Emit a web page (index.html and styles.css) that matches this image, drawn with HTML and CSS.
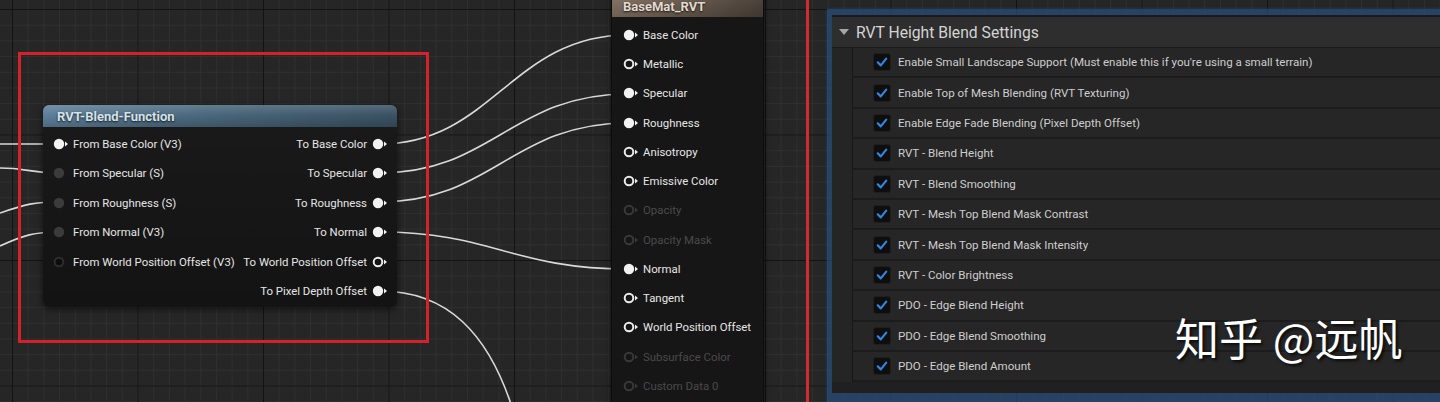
FILE: index.html
```html
<!DOCTYPE html>
<html lang="en">
<head>
<meta charset="utf-8">
<title>RVT Blend</title>
<link rel="stylesheet" href="styles.css">
</head>
<body>
<div class="canvas">
  <svg class="wires" width="1440" height="402" viewBox="0 0 1440 402">
    <path d="M0 144 L60 144"/>
    <path d="M0 168 C28 168 28 173 60 173"/>
    <path d="M0 213 C26 204 34 202 60 202"/>
    <path d="M0 246 C24 235 34 232 60 232"/>
    <path d="M380 144 C492 144 512 35 628 35"/>
    <path d="M380 173 C492 173 512 94 628 94"/>
    <path d="M380 202 C492 202 512 123 628 123"/>
    <path d="M380 232 C492 232 512 269 628 269"/>
    <path d="M380 291 C445 291 490 330 516 420"/>
  </svg>

  <div class="sel-box"></div>
  <div class="sel-line"></div>

  <div class="node rvt">
    <div class="node-title">RVT-Blend-Function</div>
    <div class="node-body">
      <div class="row">
        <span class="pin-l"><svg class="pin on" viewBox="0 0 16 12"><circle cx="6" cy="6" r="5.2"/><path d="M12 3.6 L15 6 L12 8.4Z"/></svg>From Base Color (V3)</span>
        <span class="pin-r">To Base Color<svg class="pin on" viewBox="0 0 16 12"><circle cx="6" cy="6" r="5.2"/><path d="M12 3.6 L15 6 L12 8.4Z"/></svg></span>
      </div>
      <div class="row">
        <span class="pin-l"><svg class="pin dimfill" viewBox="0 0 16 12"><circle cx="6" cy="6" r="5.2"/></svg>From Specular (S)</span>
        <span class="pin-r">To Specular<svg class="pin on" viewBox="0 0 16 12"><circle cx="6" cy="6" r="5.2"/><path d="M12 3.6 L15 6 L12 8.4Z"/></svg></span>
      </div>
      <div class="row">
        <span class="pin-l"><svg class="pin dimfill" viewBox="0 0 16 12"><circle cx="6" cy="6" r="5.2"/></svg>From Roughness (S)</span>
        <span class="pin-r">To Roughness<svg class="pin on" viewBox="0 0 16 12"><circle cx="6" cy="6" r="5.2"/><path d="M12 3.6 L15 6 L12 8.4Z"/></svg></span>
      </div>
      <div class="row">
        <span class="pin-l"><svg class="pin dimfill" viewBox="0 0 16 12"><circle cx="6" cy="6" r="5.2"/></svg>From Normal (V3)</span>
        <span class="pin-r">To Normal<svg class="pin on" viewBox="0 0 16 12"><circle cx="6" cy="6" r="5.2"/><path d="M12 3.6 L15 6 L12 8.4Z"/></svg></span>
      </div>
      <div class="row">
        <span class="pin-l"><svg class="pin darkring" viewBox="0 0 16 12"><circle cx="6" cy="6" r="4.3"/></svg>From World Position Offset (V3)</span>
        <span class="pin-r">To World Position Offset<svg class="pin ring" viewBox="0 0 16 12"><circle cx="6" cy="6" r="4.3"/><path d="M12 3.6 L15 6 L12 8.4Z"/></svg></span>
      </div>
      <div class="row">
        <span class="pin-l"></span>
        <span class="pin-r">To Pixel Depth Offset<svg class="pin on" viewBox="0 0 16 12"><circle cx="6" cy="6" r="5.2"/><path d="M12 3.6 L15 6 L12 8.4Z"/></svg></span>
      </div>
    </div>
  </div>

  <div class="node mat">
    <div class="node-title">BaseMat_RVT</div>
    <div class="node-body">
      <div class="mrow"><svg class="pin on" viewBox="0 0 16 12"><circle cx="6" cy="6" r="5.2"/><path d="M12 3.6 L15 6 L12 8.4Z"/></svg>Base Color</div>
      <div class="mrow"><svg class="pin ring" viewBox="0 0 16 12"><circle cx="6" cy="6" r="4.3"/><path d="M12 3.6 L15 6 L12 8.4Z"/></svg>Metallic</div>
      <div class="mrow"><svg class="pin on" viewBox="0 0 16 12"><circle cx="6" cy="6" r="5.2"/><path d="M12 3.6 L15 6 L12 8.4Z"/></svg>Specular</div>
      <div class="mrow"><svg class="pin on" viewBox="0 0 16 12"><circle cx="6" cy="6" r="5.2"/><path d="M12 3.6 L15 6 L12 8.4Z"/></svg>Roughness</div>
      <div class="mrow"><svg class="pin ring" viewBox="0 0 16 12"><circle cx="6" cy="6" r="4.3"/><path d="M12 3.6 L15 6 L12 8.4Z"/></svg>Anisotropy</div>
      <div class="mrow"><svg class="pin ring" viewBox="0 0 16 12"><circle cx="6" cy="6" r="4.3"/><path d="M12 3.6 L15 6 L12 8.4Z"/></svg>Emissive Color</div>
      <div class="mrow dim"><svg class="pin dimring" viewBox="0 0 16 12"><circle cx="6" cy="6" r="4.3"/><path d="M12 3.6 L15 6 L12 8.4Z"/></svg>Opacity</div>
      <div class="mrow dim"><svg class="pin dimring" viewBox="0 0 16 12"><circle cx="6" cy="6" r="4.3"/><path d="M12 3.6 L15 6 L12 8.4Z"/></svg>Opacity Mask</div>
      <div class="mrow"><svg class="pin on" viewBox="0 0 16 12"><circle cx="6" cy="6" r="5.2"/><path d="M12 3.6 L15 6 L12 8.4Z"/></svg>Normal</div>
      <div class="mrow"><svg class="pin ring" viewBox="0 0 16 12"><circle cx="6" cy="6" r="4.3"/><path d="M12 3.6 L15 6 L12 8.4Z"/></svg>Tangent</div>
      <div class="mrow"><svg class="pin ring" viewBox="0 0 16 12"><circle cx="6" cy="6" r="4.3"/><path d="M12 3.6 L15 6 L12 8.4Z"/></svg>World Position Offset</div>
      <div class="mrow dim"><svg class="pin dimring" viewBox="0 0 16 12"><circle cx="6" cy="6" r="4.3"/><path d="M12 3.6 L15 6 L12 8.4Z"/></svg>Subsurface Color</div>
      <div class="mrow dim"><svg class="pin dimring" viewBox="0 0 16 12"><circle cx="6" cy="6" r="4.3"/><path d="M12 3.6 L15 6 L12 8.4Z"/></svg>Custom Data 0</div>
    </div>
  </div>

  <div class="details">
    <div class="cat"><span class="tri"></span>RVT Height Blend Settings</div>
    <div class="prop"><span class="indent"></span><div class="prop-main"><span class="cb"><svg viewBox="0 0 18 18"><path d="M4.2 9.4 L7.6 12.8 L13.8 5.2"/></svg></span>Enable Small Landscape Support (Must enable this if you're using a small terrain)</div></div>
    <div class="prop"><span class="indent"></span><div class="prop-main"><span class="cb"><svg viewBox="0 0 18 18"><path d="M4.2 9.4 L7.6 12.8 L13.8 5.2"/></svg></span>Enable Top of Mesh Blending (RVT Texturing)</div></div>
    <div class="prop"><span class="indent"></span><div class="prop-main"><span class="cb"><svg viewBox="0 0 18 18"><path d="M4.2 9.4 L7.6 12.8 L13.8 5.2"/></svg></span>Enable Edge Fade Blending (Pixel Depth Offset)</div></div>
    <div class="prop"><span class="indent"></span><div class="prop-main"><span class="cb"><svg viewBox="0 0 18 18"><path d="M4.2 9.4 L7.6 12.8 L13.8 5.2"/></svg></span>RVT - Blend Height</div></div>
    <div class="prop"><span class="indent"></span><div class="prop-main"><span class="cb"><svg viewBox="0 0 18 18"><path d="M4.2 9.4 L7.6 12.8 L13.8 5.2"/></svg></span>RVT - Blend Smoothing</div></div>
    <div class="prop"><span class="indent"></span><div class="prop-main"><span class="cb"><svg viewBox="0 0 18 18"><path d="M4.2 9.4 L7.6 12.8 L13.8 5.2"/></svg></span>RVT - Mesh Top Blend Mask Contrast</div></div>
    <div class="prop"><span class="indent"></span><div class="prop-main"><span class="cb"><svg viewBox="0 0 18 18"><path d="M4.2 9.4 L7.6 12.8 L13.8 5.2"/></svg></span>RVT - Mesh Top Blend Mask Intensity</div></div>
    <div class="prop"><span class="indent"></span><div class="prop-main"><span class="cb"><svg viewBox="0 0 18 18"><path d="M4.2 9.4 L7.6 12.8 L13.8 5.2"/></svg></span>RVT - Color Brightness</div></div>
    <div class="prop"><span class="indent"></span><div class="prop-main"><span class="cb"><svg viewBox="0 0 18 18"><path d="M4.2 9.4 L7.6 12.8 L13.8 5.2"/></svg></span>PDO - Edge Blend Height</div></div>
    <div class="prop"><span class="indent"></span><div class="prop-main"><span class="cb"><svg viewBox="0 0 18 18"><path d="M4.2 9.4 L7.6 12.8 L13.8 5.2"/></svg></span>PDO - Edge Blend Smoothing</div></div>
    <div class="prop"><span class="indent"></span><div class="prop-main"><span class="cb"><svg viewBox="0 0 18 18"><path d="M4.2 9.4 L7.6 12.8 L13.8 5.2"/></svg></span>PDO - Edge Blend Amount</div></div>
    <div class="details-foot"></div>
  </div>

  <div class="watermark">知乎 @远帆</div>
</div>
</body>
</html>
```

FILE: styles.css
```css
html, body {
  margin: 0;
  padding: 0;
  background: #252525;
}

.canvas {
  position: relative;
  width: 1440px;
  height: 402px;
  overflow: hidden;
  font-family: Roboto, "Liberation Sans", sans-serif;
  background-color: #262626;
  background-image:
    linear-gradient(to right, #131313 1px, transparent 1px),
    linear-gradient(to bottom, #131313 1px, transparent 1px),
    linear-gradient(to right, #2f2f2f 1px, transparent 1px),
    linear-gradient(to bottom, #2f2f2f 1px, transparent 1px);
  background-size: 125.5px 125.5px, 125.5px 125.5px, 15.6875px 15.6875px, 15.6875px 15.6875px;
  background-position: 12px 9px, 12px 9px, 12px 9px, 12px 9px;
}

.wires {
  position: absolute;
  left: 0;
  top: 0;
}

.wires path {
  fill: none;
  stroke: #d9d9d9;
  stroke-width: 1.6;
}

.sel-box {
  position: absolute;
  left: 18px;
  top: 52px;
  width: 411px;
  height: 291px;
  box-sizing: border-box;
  border: 3px solid #d3222c;
}

.sel-line {
  position: absolute;
  left: 806px;
  top: 0;
  width: 3px;
  height: 402px;
  background: #d52930;
}

/* ---------- nodes ---------- */
.node {
  position: absolute;
  background: #151515;
  color: #e6e6e6;
  font-size: 11.4px;
  box-shadow: 0 2px 6px rgba(0, 0, 0, 0.6);
}

.node-title {
  font-weight: bold;
  font-size: 13px;
  box-sizing: border-box;
  text-shadow: 0 1px 2px rgba(0, 0, 0, 0.8);
}

.rvt {
  left: 43px;
  top: 105px;
  width: 354px;
  height: 202px;
  border-radius: 6px;
  overflow: hidden;
  background: linear-gradient(to bottom, #1a1a1a, #131313);
}

.rvt .node-title {
  height: 22px;
  line-height: 23px;
  padding-left: 14px;
  color: #d6e2ea;
  background:
    linear-gradient(to bottom, rgba(255, 255, 255, 0.14), rgba(255, 255, 255, 0) 45%, rgba(0, 0, 0, 0.18)),
    linear-gradient(to right, #5f809a, #4b687d 45%, #3a5263);
}

.rvt .node-body {
  padding-top: 2.4px;
}

.row {
  height: 29.4px;
  display: flex;
  align-items: center;
  justify-content: space-between;
  padding: 0 9px 0 10px;
}

.pin-l, .pin-r {
  display: flex;
  align-items: center;
  white-space: nowrap;
}

.pin-l { gap: 4px; }
.pin-r { gap: 5px; }

.pin {
  width: 16px;
  height: 12px;
  flex: none;
}

.pin.on circle, .pin.on path { fill: #f2f2f2; }
.pin.ring circle { fill: none; stroke: #ececec; stroke-width: 2; }
.pin.ring path { fill: #ececec; }
.pin.dimfill circle { fill: #3b3b3b; }
.pin.darkring circle { fill: #0c0c0c; stroke: #2e2e2e; stroke-width: 2; }
.pin.dimring circle { fill: none; stroke: #393939; stroke-width: 2; }
.pin.dimring path { fill: #393939; }

.mat {
  left: 611px;
  top: -14px;
  width: 153px;
  height: 440px;
  border-radius: 6px;
  overflow: hidden;
  background: #161616;
  border-left: 1px solid #0d0d0d;
  border-right: 1px solid #0d0d0d;
  box-sizing: border-box;
}

.mat .node-title {
  height: 31px;
  padding: 13px 0 0 11px;
  line-height: 16px;
  color: #e2d9d0;
  background:
    linear-gradient(to bottom, rgba(255, 255, 255, 0.05), rgba(0, 0, 0, 0.2)),
    linear-gradient(to right, #8b7968, #6c5d50 55%, #4d433b);
}

.mat .node-body {
  padding-top: 3.3px;
}

.mrow {
  height: 29.25px;
  display: flex;
  align-items: center;
  gap: 4px;
  padding-left: 11px;
  white-space: nowrap;
}

.mrow.dim {
  color: #4a4a4a;
}

/* ---------- details panel ---------- */
.details {
  position: absolute;
  left: 827px;
  top: 9px;
  width: 640px;
  height: 398px;
  box-sizing: border-box;
  border-style: solid;
  border-color: rgba(40, 78, 124, 0.7);
  border-width: 6px 0 14px 5px;
  background: #1f1f1f;
  background-clip: padding-box;
  box-shadow: 0 0 3px rgba(40, 100, 180, 0.35);
  display: flex;
  flex-direction: column;
  color: #cecece;
}

.cat {
  height: 33px;
  flex: none;
  box-sizing: border-box;
  border-top: 2px solid #1a1a1a;
  border-bottom: 1px solid #1b1b1b;
  background: #2e2e2e;
  display: flex;
  align-items: center;
  gap: 7px;
  padding-left: 7px;
  font-size: 15.7px;
  color: #d4d4d4;
}

.tri {
  width: 0;
  height: 0;
  border-left: 5px solid transparent;
  border-right: 5px solid transparent;
  border-top: 6px solid #a6a6a6;
}

.prop {
  height: 30.4px;
  flex: none;
  display: flex;
}

.indent {
  width: 20px;
  flex: none;
  background: #252525;
  border-right: 1px solid #181818;
}

.prop-main {
  flex: 1;
  display: flex;
  align-items: center;
  gap: 7px;
  padding-left: 20px;
  box-sizing: border-box;
  background: #262626;
  border-bottom: 2px solid #1c1c1c;
  font-size: 11.55px;
  white-space: nowrap;
}

.cb {
  width: 18px;
  height: 18px;
  flex: none;
  box-sizing: border-box;
  border-radius: 3px;
  background: #0e0e0e;
  border: 1px solid #1e1e1e;
  display: flex;
  align-items: center;
  justify-content: center;
}

.cb svg {
  width: 18px;
  height: 18px;
}

.cb path {
  fill: none;
  stroke: #2f88e4;
  stroke-width: 2.4;
  stroke-linecap: round;
  stroke-linejoin: round;
}

.details-foot {
  flex: 1;
  background: #202020;
}

.watermark {
  position: absolute;
  left: 1175px;
  top: 309px;
  font-family: "Noto Sans CJK SC", sans-serif;
  font-size: 44px;
  line-height: 56px;
  font-weight: 400;
  color: #ffffff;
  white-space: nowrap;
  text-shadow: 2px 2px 3px rgba(0, 0, 0, 0.75);
}
```
